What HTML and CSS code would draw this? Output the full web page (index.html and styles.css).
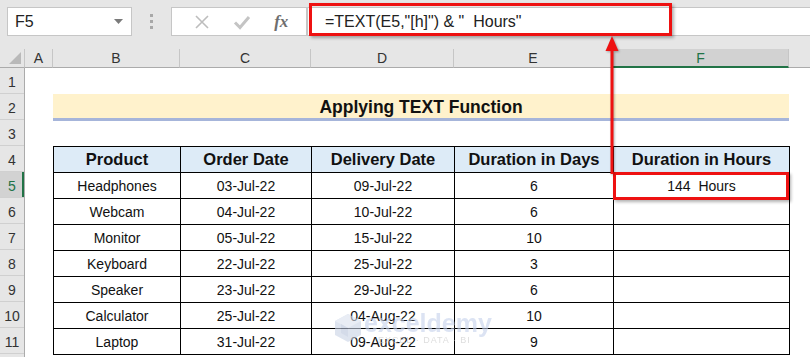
FILE: index.html
```html
<!DOCTYPE html>
<html lang="en">
<head>
  <meta charset="UTF-8" />
  <title>Applying TEXT Function</title>
  <link rel="stylesheet" href="styles.css">
</head>
<body>
  <div class="app">
    <!-- Formula bar -->
    <div class="toolbar">
      <div class="namebox">
        <span>F5</span>
        <svg class="caret" width="9" height="5" viewBox="0 0 9 5"><path d="M0 0h9L4.5 5z" fill="#7a7a7a"/></svg>
      </div>
      <div class="grip"><i></i><i></i><i></i></div>
      <div class="fx-buttons">
        <svg width="16" height="16" viewBox="0 0 16 16"><path d="M2 2l12 12M14 2L2 14" stroke="#bdbdbd" stroke-width="1.6" fill="none"/></svg>
        <svg width="18" height="16" viewBox="0 0 18 16"><path d="M2 8.5l5 5L16 3" stroke="#c4c4c4" stroke-width="3" fill="none"/></svg>
        <span class="fx">fx</span>
      </div>
      <div class="formula">=TEXT(E5,"[h]") &amp; "&nbsp; Hours"</div>
      <div class="formula-mark"></div>
    </div>

    <!-- Sheet -->
    <div class="sheet">
      <div class="col-heads">
        <div class="corner">
          <svg width="12" height="12" viewBox="0 0 12 12"><path d="M12 0V12H0z" fill="#b9b9b9"/></svg>
        </div>
        <div class="col-head col-a">A</div>
        <div class="col-head col-b">B</div>
        <div class="col-head col-c">C</div>
        <div class="col-head col-d">D</div>
        <div class="col-head col-e">E</div>
        <div class="col-head col-f selected">F</div>
        <div class="col-head col-g"></div>
      </div>

      <div class="sheet-body">
        <div class="row-heads">
          <div class="row-head">1</div>
          <div class="row-head">2</div>
          <div class="row-head">3</div>
          <div class="row-head">4</div>
          <div class="row-head selected">5</div>
          <div class="row-head">6</div>
          <div class="row-head">7</div>
          <div class="row-head">8</div>
          <div class="row-head">9</div>
          <div class="row-head">10</div>
          <div class="row-head">11</div>
          <div class="row-head"></div>
        </div>

        <div class="cells">
          <div class="blank-row"></div>
          <div class="title">Applying TEXT Function</div>
          <div class="blank-row"></div>

          <table class="data">
            <tr>
              <th class="w-b">Product</th>
              <th class="w-c">Order Date</th>
              <th class="w-d">Delivery Date</th>
              <th class="w-e">Duration in Days</th>
              <th class="w-f">Duration in Hours</th>
            </tr>
            <tr>
              <td>Headphones</td><td>03-Jul-22</td><td>09-Jul-22</td><td>6</td>
              <td class="active">144&nbsp; Hours<div class="cell-mark"></div></td>
            </tr>
            <tr><td>Webcam</td><td>04-Jul-22</td><td>10-Jul-22</td><td>6</td><td></td></tr>
            <tr><td>Monitor</td><td>05-Jul-22</td><td>15-Jul-22</td><td>10</td><td></td></tr>
            <tr><td>Keyboard</td><td>22-Jul-22</td><td>25-Jul-22</td><td>3</td><td></td></tr>
            <tr><td>Speaker</td><td>23-Jul-22</td><td>29-Jul-22</td><td>6</td><td></td></tr>
            <tr><td>Calculator</td><td>25-Jul-22</td><td>04-Aug-22</td><td>10</td><td></td></tr>
            <tr><td>Laptop</td><td>31-Jul-22</td><td>09-Aug-22</td><td>9</td><td></td></tr>
          </table>
        </div>
      </div>
    </div>

    <!-- Arrow from F5 up to the formula -->
    <svg class="arrow" width="26" height="146" viewBox="0 0 26 146">
      <path d="M12 5L5.5 20h13z" fill="#ee1111"/>
      <rect x="10.5" y="19" width="3" height="124" fill="#ee1111"/>
    </svg>

    <!-- Watermark -->
    <div class="watermark">
      <svg width="28" height="30" viewBox="0 0 28 30">
        <path d="M14 1L27 8v14L14 29 1 22V8z" fill="#c9d3e6"/>
        <path d="M14 1L27 8 14 15 1 8z" fill="#dbe2ef"/>
        <path d="M7 11l7 4v9l-7-4z" fill="#b8c4dc"/>
      </svg>
      <div class="wm-text">
        <div class="wm-name">exceldemy</div>
        <div class="wm-sub">EXCEL · DATA · BI</div>
      </div>
    </div>
  </div>
</body>
</html>
```

FILE: styles.css
```css
body {
  margin: 0;
  padding: 0;
  font-family: "Liberation Sans", Arial, sans-serif;
  background-color: #ffffff;
  overflow: hidden;
}

.app {
  position: relative;
  width: 810px;
  height: 357px;
  overflow: hidden;
}

/* Formula bar */
.toolbar {
  position: relative;
  height: 49px;
  background-color: #e6e6e6;
  display: flex;
  align-items: flex-start;
  padding: 7px 0 0 7px;
  box-sizing: border-box;
}

.namebox {
  width: 125px;
  height: 29px;
  background: #fff;
  border: 1px solid #c6c6c6;
  box-sizing: border-box;
  display: flex;
  align-items: center;
  justify-content: space-between;
  padding: 0 8px 0 7px;
  font-size: 16px;
  color: #222;
}

.grip {
  width: 39px;
  height: 29px;
  display: flex;
  flex-direction: column;
  align-items: center;
  justify-content: center;
  gap: 3px;
}

.grip i {
  display: block;
  width: 3px;
  height: 3px;
  background: #a8a8a8;
}

.fx-buttons {
  width: 136px;
  height: 29px;
  background: #fff;
  border: 1px solid #c6c6c6;
  box-sizing: border-box;
  display: flex;
  align-items: center;
  justify-content: space-around;
  padding: 0 6px 0 10px;
}

.fx {
  font-family: "Liberation Serif", "Times New Roman", serif;
  font-style: italic;
  font-weight: bold;
  font-size: 17px;
  color: #6e6e6e;
}

.formula {
  flex-grow: 1;
  height: 29px;
  background: #fff;
  border: 1px solid #c6c6c6;
  border-right: none;
  box-sizing: border-box;
  padding-left: 17px;
  line-height: 27px;
  font-size: 16px;
  color: #222;
  white-space: pre;
}

.formula-mark {
  position: absolute;
  left: 309px;
  top: 3px;
  width: 363px;
  height: 33px;
  border: 3px solid #ee1111;
  box-sizing: border-box;
  box-shadow: 2px 2px 3px rgba(0, 0, 0, 0.3);
}

/* Sheet headers */
.col-heads {
  display: flex;
  height: 19px;
  background: #e6e6e6;
}

.corner {
  width: 25px;
  border-right: 1px solid #c6c6c6;
  border-bottom: 1px solid #ababab;
  box-sizing: border-box;
  display: flex;
  align-items: flex-end;
  justify-content: flex-end;
  padding: 0 3px 3px 0;
}

.col-head {
  border-right: 1px solid #c6c6c6;
  border-bottom: 1px solid #ababab;
  box-sizing: border-box;
  text-align: center;
  font-size: 14px;
  line-height: 18px;
  color: #333;
}

.col-head.selected {
  background: #d2d2d2;
  border-bottom: 2px solid #217346;
  color: #217346;
}

.col-a { width: 28px; }
.col-b { width: 127px; }
.col-c { width: 131px; }
.col-d { width: 143px; }
.col-e { width: 159px; }
.col-f { width: 176px; }
.col-g { flex-grow: 1; border-right: none; }

.sheet-body {
  display: flex;
}

.row-heads {
  width: 25px;
  background: #e6e6e6;
  border-right: 1px solid #ababab;
  box-sizing: border-box;
}

.row-head {
  height: 26px;
  border-bottom: 1px solid #d0d0d0;
  box-sizing: border-box;
  display: flex;
  align-items: flex-end;
  justify-content: center;
  padding-bottom: 3px;
  font-size: 14px;
  color: #333;
}

.row-head.selected {
  background: #d2d2d2;
  color: #217346;
  box-shadow: inset -2px 0 0 #217346;
}

/* Cells */
.cells {
  padding-left: 28px;
}

.blank-row {
  height: 26px;
}

.title {
  width: 736px;
  height: 27px;
  background: #fff2cc;
  border-bottom: 3px solid #a6b5da;
  box-sizing: border-box;
  text-align: center;
  font-size: 17.5px;
  font-weight: bold;
  line-height: 27px;
  color: #111;
}

.data {
  margin-top: -1px;
  border-collapse: collapse;
  font-size: 14px;
  color: #111;
}

.data th,
.data td {
  height: 25px;
  padding: 0;
  border: 1px solid #000;
  text-align: center;
}

.data th {
  background: #ddebf7;
  font-size: 16.5px;
  font-weight: bold;
}

.w-b { width: 126px; }
.w-c { width: 130px; }
.w-d { width: 142px; }
.w-e { width: 158px; }
.w-f { width: 175px; }

.data td.active {
  position: relative;
}

.cell-mark {
  position: absolute;
  left: -1px;
  top: -1px;
  right: 0;
  bottom: -2px;
  border: 3px solid #ee1111;
  box-shadow: 2px 2px 3px rgba(0, 0, 0, 0.3);
}

/* Overlays */
.arrow {
  position: absolute;
  left: 600px;
  top: 31px;
  filter: drop-shadow(1px 1px 1px rgba(0, 0, 0, 0.3));
}

.watermark {
  position: absolute;
  left: 334px;
  top: 311px;
  display: flex;
  align-items: center;
  gap: 2px;
  opacity: 0.6;
}

.wm-name {
  font-size: 25px;
  font-weight: bold;
  color: #c5d2ec;
  line-height: 24px;
}

.wm-sub {
  font-size: 9px;
  letter-spacing: 1px;
  color: #c8c8c8;
  padding-left: 14px;
}
```
